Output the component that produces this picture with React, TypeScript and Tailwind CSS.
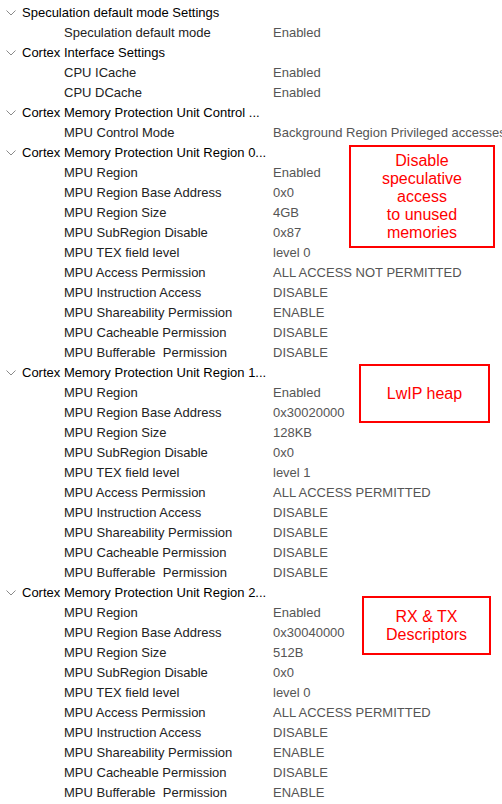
type Item = [string, string];

type Group = {
  title: string;
  items: Item[];
};

const groups: Group[] = [
  {
    title: 'Speculation default mode Settings',
    items: [['Speculation default mode', 'Enabled']],
  },
  {
    title: 'Cortex Interface Settings',
    items: [
      ['CPU ICache', 'Enabled'],
      ['CPU DCache', 'Enabled'],
    ],
  },
  {
    title: 'Cortex Memory Protection Unit Control ...',
    items: [['MPU Control Mode', 'Background Region Privileged accesses']],
  },
  {
    title: 'Cortex Memory Protection Unit Region 0...',
    items: [
      ['MPU Region', 'Enabled'],
      ['MPU Region Base Address', '0x0'],
      ['MPU Region Size', '4GB'],
      ['MPU SubRegion Disable', '0x87'],
      ['MPU TEX field level', 'level 0'],
      ['MPU Access Permission', 'ALL ACCESS NOT PERMITTED'],
      ['MPU Instruction Access', 'DISABLE'],
      ['MPU Shareability Permission', 'ENABLE'],
      ['MPU Cacheable Permission', 'DISABLE'],
      ['MPU Bufferable  Permission', 'DISABLE'],
    ],
  },
  {
    title: 'Cortex Memory Protection Unit Region 1...',
    items: [
      ['MPU Region', 'Enabled'],
      ['MPU Region Base Address', '0x30020000'],
      ['MPU Region Size', '128KB'],
      ['MPU SubRegion Disable', '0x0'],
      ['MPU TEX field level', 'level 1'],
      ['MPU Access Permission', 'ALL ACCESS PERMITTED'],
      ['MPU Instruction Access', 'DISABLE'],
      ['MPU Shareability Permission', 'DISABLE'],
      ['MPU Cacheable Permission', 'DISABLE'],
      ['MPU Bufferable  Permission', 'DISABLE'],
    ],
  },
  {
    title: 'Cortex Memory Protection Unit Region 2...',
    items: [
      ['MPU Region', 'Enabled'],
      ['MPU Region Base Address', '0x30040000'],
      ['MPU Region Size', '512B'],
      ['MPU SubRegion Disable', '0x0'],
      ['MPU TEX field level', 'level 0'],
      ['MPU Access Permission', 'ALL ACCESS PERMITTED'],
      ['MPU Instruction Access', 'DISABLE'],
      ['MPU Shareability Permission', 'ENABLE'],
      ['MPU Cacheable Permission', 'DISABLE'],
      ['MPU Bufferable  Permission', 'ENABLE'],
    ],
  },
];

function Chevron() {
  return (
    <svg width="10" height="6" viewBox="0 0 10 6" className="shrink-0">
      <path d="M0.5 0.5 L5 5 L9.5 0.5" fill="none" stroke="#8a8a8a" strokeWidth="1" />
    </svg>
  );
}

function Note({ className, children }: { className: string; children: React.ReactNode }) {
  return (
    <div
      className={`absolute flex flex-col items-center justify-center border-2 border-[#ff0000] bg-white text-center text-[16px] leading-[18px] text-[#ff0000] ${className}`}
    >
      {children}
    </div>
  );
}

export default function App() {
  return (
    <div
      className="relative h-[804px] w-[502px] overflow-hidden bg-white pt-[3px] text-[13px] leading-[20px]"
      style={{ fontFamily: '"Liberation Sans", Arial, sans-serif' }}
    >
      {groups.map((g) => (
        <div key={g.title}>
          <div className="flex h-5 items-center whitespace-nowrap">
            <div className="flex w-[22px] justify-end pr-[6px]">
              <Chevron />
            </div>
            <div className="text-black">{g.title}</div>
          </div>
          {g.items.map(([label, value], i) => (
            <div key={i} className="flex h-5 items-center whitespace-pre">
              <div className="w-[273px] shrink-0 pl-[64px] text-[#222]">{label}</div>
              <div className="text-[#555]">{value}</div>
            </div>
          ))}
        </div>
      ))}

      <Note className="left-[349px] top-[145px] h-[103px] w-[146px]">
        <span>Disable</span>
        <span>speculative</span>
        <span>access</span>
        <span>to unused</span>
        <span>memories</span>
      </Note>
      <Note className="left-[359px] top-[364px] h-[59px] w-[131px]">
        <span>LwIP heap</span>
      </Note>
      <Note className="left-[362px] top-[596px] h-[59px] w-[129px]">
        <span>RX &amp; TX</span>
        <span>Descriptors</span>
      </Note>
    </div>
  );
}
